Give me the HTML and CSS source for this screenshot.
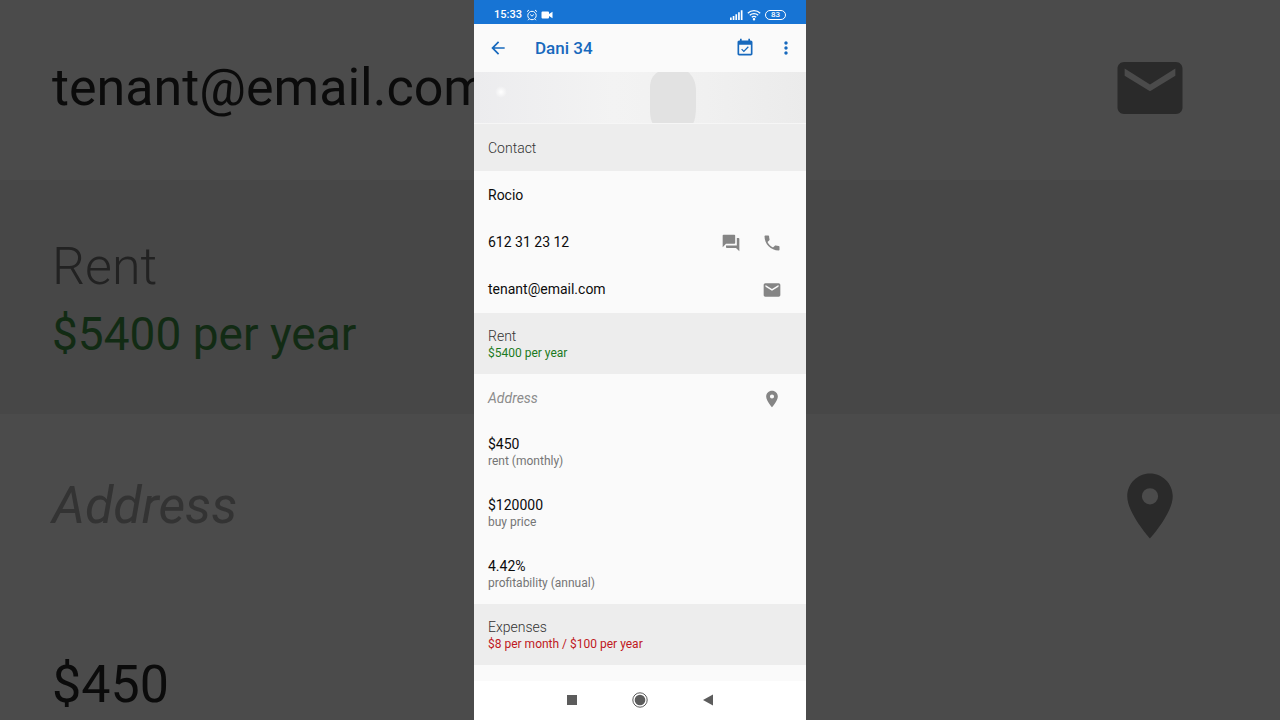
FILE: index.html
```html
<!DOCTYPE html>
<html lang="en">
<head>
  <meta charset="UTF-8">
  <meta name="viewport" content="width=device-width, initial-scale=1">
  <title>Dani 34</title>
  <link rel="stylesheet" href="styles.css">
</head>
<body>

<!-- enlarged, darkened view behind the phone -->
<div class="backdrop" aria-hidden="true">
  <div class="big-row">
    <p>tenant@email.com</p>
    <svg class="big-icon" viewBox="0 0 24 24"><path d="M20 4H4c-1.100 0-2 .9-2 2v12c0 1.100.9 2 2 2h16c1.100 0 2-.9 2-2V6c0-1.100-.9-2-2-2zm-.2 4.200L12 13 4.200 8.200V6L12 10.900 19.800 6z"/></svg>
  </div>
  <div class="big-section">
    <h2>Rent</h2>
    <p class="big-sum">$5400 per year</p>
  </div>
  <div class="big-row">
    <p class="empty">Address</p>
    <svg class="big-icon" viewBox="0 0 24 24"><path d="M12 2C8.130 2 5 5.130 5 9c0 5.250 7 13 7 13s7-7.750 7-13c0-3.870-3.130-7-7-7zm0 9.500a2.500 2.500 0 0 1 0-5 2.500 2.500 0 0 1 0 5z"/></svg>
  </div>
  <div class="big-value">
    <p>$450</p>
  </div>
</div>

<div class="phone">
  <div class="status-bar">
    <span class="time">15:33</span>
    <svg width="12" height="12" viewBox="0 0 12 12" fill="none" stroke="#fff"><circle cx="6" cy="6.500" r="4.200"/><path d="M1 2.700 3 1M11 2.700 9 1M2.800 10.200 2 11.200M9.200 10.200l.8 1M4.200 5.500 6 7.200l1.800-1.700"/></svg>
    <svg width="12" height="12" viewBox="0 0 12 12" fill="#fff"><path d="M1.500 2.500h5.500a1 1 0 0 1 1 1V5l3.500-2.200v6.400L8 7v1.500a1 1 0 0 1-1 1H1.500a1 1 0 0 1-1-1v-5a1 1 0 0 1 1-1z"/></svg>
    <div class="status-right">
      <svg width="13" height="12" viewBox="0 0 13 12" fill="#fff"><path d="M0 8.500h1.700V11H0zM2.700 7h1.700v4H2.700zM5.400 5.200h1.700V11H5.400zM8.100 3.300h1.700V11H8.100zM10.800 1.300h1.700V11h-1.700z"/></svg>
      <svg width="14" height="12" viewBox="0 0 14 12" fill="none" stroke="#fff" stroke-width="1.300"><path d="M.8 4.200a9 9 0 0 1 12.400 0M2.800 6.300a6.200 6.200 0 0 1 8.400 0M4.800 8.300a3.300 3.300 0 0 1 4.400 0"/><circle cx="7" cy="10.200" r=".6" fill="#fff"/></svg>
      <span class="battery">83</span>
    </div>
  </div>

  <header class="app-bar">
    <button class="icon-btn" aria-label="Back">
      <svg viewBox="0 0 24 24"><path d="M20 11H7.830l5.590-5.590L12 4l-8 8 8 8 1.410-1.410L7.830 13H20v-2z"/></svg>
    </button>
    <h1>Dani 34</h1>
    <button class="icon-btn" aria-label="Calendar">
      <svg viewBox="0 0 24 24"><path d="M16.530 11.060 15.470 10l-4.880 4.880-2.120-2.120-1.060 1.060L10.590 17l5.940-5.940zM19 3h-1V1h-2v2H8V1H6v2H5c-1.110 0-1.990.9-1.990 2L3 19c0 1.100.89 2 2 2h14c1.100 0 2-.9 2-2V5c0-1.100-.9-2-2-2zm0 16H5V8h14v11z"/></svg>
    </button>
    <button class="icon-btn" aria-label="More options">
      <svg viewBox="0 0 24 24"><path d="M12 8c1.100 0 2-.9 2-2s-.9-2-2-2-2 .9-2 2 .9 2 2 2zm0 2c-1.100 0-2 .9-2 2s.9 2 2 2 2-.9 2-2-.9-2-2-2zm0 6c-1.100 0-2 .9-2 2s.9 2 2 2 2-.9 2-2-.9-2-2-2z"/></svg>
    </button>
  </header>

  <main class="content">
    <svg class="photo" viewBox="0 0 332 52" preserveAspectRatio="none">
      <defs>
        <linearGradient id="wall">
          <stop offset="0" stop-color="#ececee"/>
          <stop offset=".42" stop-color="#f3f3f3"/>
          <stop offset=".7" stop-color="#f0f0f0"/>
          <stop offset="1" stop-color="#ebebeb"/>
        </linearGradient>
        <radialGradient id="shine">
          <stop offset="0" stop-color="#fff"/>
          <stop offset="1" stop-color="#fff" stop-opacity="0"/>
        </radialGradient>
      </defs>
      <path fill="url(#wall)" d="M0 0h332v52H0z"/>
      <circle cx="27" cy="20" r="6" fill="url(#shine)"/>
      <path fill="#e2e2e2" d="M184 0h30c5 4 8 10 8 19v16c0 7-1 13-3 17h-40c-2-3-3-8-3-13V15c0-7 3-12 8-15z"/>
      <path fill="#f6f6f6" d="M0 51h332v1H0z"/>
    </svg>

    <section>
      <div class="section-head">
        <h2>Contact</h2>
      </div>
      <div class="row">
        <p>Rocio</p>
      </div>
      <div class="row">
        <p>612 31 23 12</p>
        <button class="icon-btn" aria-label="Send message">
          <svg viewBox="0 0 24 24"><path d="M21 6h-2v9H6v2c0 .55.45 1 1 1h11l4 4V7c0-.55-.45-1-1-1zm-4 6V3c0-.55-.45-1-1-1H3c-.55 0-1 .45-1 1v14l4-4h10c.55 0 1-.45 1-1z"/></svg>
        </button>
        <button class="icon-btn" aria-label="Call">
          <svg viewBox="0 0 24 24"><path d="M6.620 10.790c1.440 2.830 3.760 5.140 6.590 6.590l2.200-2.200c.27-.27.67-.36 1.020-.24 1.120.37 2.330.57 3.570.57.55 0 1 .45 1 1V20c0 .55-.45 1-1 1-9.390 0-17-7.610-17-17 0-.55.45-1 1-1h3.500c.55 0 1 .45 1 1 0 1.250.2 2.450.57 3.570.11.35.03.74-.25 1.020l-2.200 2.200z"/></svg>
        </button>
      </div>
      <div class="row">
        <p>tenant@email.com</p>
        <button class="icon-btn" aria-label="Send email">
          <svg viewBox="0 0 24 24"><path d="M20 4H4c-1.100 0-2 .9-2 2v12c0 1.100.9 2 2 2h16c1.100 0 2-.9 2-2V6c0-1.100-.9-2-2-2zm-.2 4.200L12 13 4.200 8.200V6L12 10.900 19.800 6z"/></svg>
        </button>
      </div>
    </section>

    <section>
      <div class="section-head">
        <h2>Rent</h2>
        <p class="income">$5400 per year</p>
      </div>
      <div class="row">
        <p class="empty">Address</p>
        <button class="icon-btn" aria-label="Show on map">
          <svg viewBox="0 0 24 24"><path d="M12 2C8.130 2 5 5.130 5 9c0 5.250 7 13 7 13s7-7.750 7-13c0-3.870-3.130-7-7-7zm0 9.500a2.500 2.500 0 0 1 0-5 2.500 2.500 0 0 1 0 5z"/></svg>
        </button>
      </div>
      <div class="value">
        <p>$450</p>
        <p class="caption">rent (monthly)</p>
      </div>
      <div class="value">
        <p>$120000</p>
        <p class="caption">buy price</p>
      </div>
      <div class="value">
        <p>4.42%</p>
        <p class="caption">profitability (annual)</p>
      </div>
    </section>

    <section>
      <div class="section-head">
        <h2>Expenses</h2>
        <p class="cost">$8 per month / $100 per year</p>
      </div>
    </section>
  </main>

  <nav class="nav-bar">
    <button class="nav-btn" aria-label="Recent apps">
      <svg viewBox="0 0 16 16"><path d="M3 3h10v10H3z"/></svg>
    </button>
    <button class="nav-btn" aria-label="Home">
      <svg viewBox="0 0 16 16"><circle cx="8" cy="8" r="7.200" fill="none" stroke="#5c5c5c"/><circle cx="8" cy="8" r="5.300"/></svg>
    </button>
    <button class="nav-btn" aria-label="Go back">
      <svg viewBox="0 0 16 16"><path d="M3 8l10-5.500v11z"/></svg>
    </button>
  </nav>
</div>

</body>
</html>
```

FILE: styles.css
```css
* {
  box-sizing: border-box;
}
body {
  margin: 0;
  height: 100vh;
  display: grid;
  grid-template: 100% / 100%;
  overflow: hidden;
  background: #4b4b4b;
  font-family: Roboto, sans-serif;
  color: #0c0c0c;
}
h1, h2, p {
  margin: 0;
}

/* both layers share the same grid cell */
.backdrop, .phone {
  grid-area: 1 / 1;
}

/* backdrop, scrolled a little past its first row */
.backdrop {
  margin-top: -4px;
  overflow: hidden;
  font-size: 52px;
  line-height: 70px;
  color: #0b0b0b;
}
.big-row {
  display: flex;
  align-items: center;
  justify-content: space-between;
  padding: 57px 91px 57px 52px;
}
.big-icon {
  width: 78px;
  height: 78px;
  margin: -4px 0;
  fill: #2a2a2a;
}
.big-section, .big-value {
  padding: 52px 52px 48px;
}
.big-section {
  background: #474747;
}
.big-section h2 {
  font-size: 52px;
  font-weight: 300;
  color: #222;
}
.big-sum {
  font-size: 46px;
  line-height: 64px;
  color: #122b14;
}
.big-row .empty {
  color: #333;
}

/* phone */
.phone {
  justify-self: center;
  width: 100%;
  max-width: 332px;
  display: flex;
  flex-direction: column;
  background: #fafafa;
  font-size: 14px;
  line-height: 18px;
}
.status-bar {
  display: flex;
  align-items: center;
  gap: 3px;
  padding: 6px 20px 0;
  height: 24px;
  background: #1774d4;
  color: #fff;
  font-size: 11px;
  font-weight: 500;
}
.time {
  margin-right: 1px;
}
.status-right {
  display: flex;
  align-items: center;
  gap: 4px;
  margin-left: auto;
}
.battery {
  width: 21px;
  border: 1px solid #fff;
  border-radius: 5px;
  font-size: 8px;
  line-height: 8px;
  text-align: center;
}
.app-bar {
  display: flex;
  align-items: center;
  gap: 21px;
  height: 48px;
  padding: 0 10px 0 14px;
  color: #1769bd;
}
.app-bar h1 {
  flex: 1;
  padding-left: 6px;
  font-size: 17px;
  line-height: 24px;
  font-weight: 500;
}
.icon-btn, .nav-btn {
  display: block;
  padding: 0;
  border: none;
  background: none;
  color: inherit;
  cursor: pointer;
}
.icon-btn svg {
  display: block;
  width: 20px;
  height: 20px;
  fill: currentColor;
}

.content {
  flex: 1;
  min-height: 0;
  overflow: hidden;
}
.photo {
  display: block;
  width: 100%;
  height: 52px;
}
.section-head, .value {
  padding: 14px 14px 12px;
}
.section-head {
  background: #ededed;
}
.section-head h2 {
  font-size: 14px;
  line-height: 18px;
  font-weight: 300;
  color: #333;
}
.section-head h2:only-child {
  line-height: 21px;
}
.section-head p, .value .caption {
  font-size: 12px;
  line-height: 17px;
}
.income {
  color: #1b7a22;
}
.cost {
  color: #c01822;
}
.row {
  display: flex;
  align-items: center;
  gap: 21px;
  padding: 14px 24px 12px 14px;
  line-height: 21px;
}
.row p {
  flex: 1;
}
.row:last-child {
  padding-bottom: 13px;
}
.row .icon-btn {
  color: #858585;
}
.empty {
  font-style: italic;
}
.row .empty {
  color: #8c8c8c;
}
.caption {
  color: #757575;
}

.nav-bar {
  display: flex;
  justify-content: center;
  gap: 52px;
  padding: 11px 0 12px;
  background: #fff;
}
.nav-btn svg {
  display: block;
  width: 16px;
  height: 16px;
  fill: #5c5c5c;
}
```
